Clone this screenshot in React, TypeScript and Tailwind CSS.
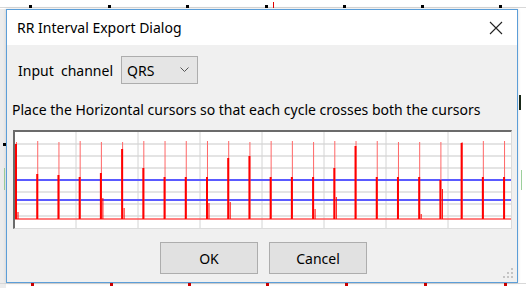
import React from "react";

// spike positions and how far up the bright red part reaches (chart-local y)
const spikes: { top: number; thick: number; bump?: number }[] = [
  { top: 10, thick: 12, bump: 80 },
  { top: 9, thick: 42 },
  { top: 10, thick: 43 },
  { top: 9, thick: 45 },
  { top: 10, thick: 41, bump: 66 },
  { top: 10, thick: 17, bump: 76 },
  { top: 9, thick: 36 },
  { top: 9, thick: 45 },
  { top: 9, thick: 45 },
  { top: 9, thick: 45, bump: 71 },
  { top: 9, thick: 26, bump: 70 },
  { top: 10, thick: 24 },
  { top: 9, thick: 45 },
  { top: 9, thick: 45 },
  { top: 10, thick: 45, bump: 77 },
  { top: 9, thick: 36, bump: 65 },
  { top: 9, thick: 14 },
  { top: 9, thick: 45 },
  { top: 10, thick: 45 },
  { top: 10, thick: 45, bump: 82 },
  { top: 10, thick: 48, bump: 57 },
  { top: 10, thick: 11 },
  { top: 9, thick: 45 },
  { top: 9, thick: 45 },
];

const vGrid = [61, 123, 185, 247, 309, 371, 433];
const hGrid = [12, 24, 36, 60, 72, 84];
const topDots = [29, 108, 186, 265, 343, 421, 499];
const bottomMarks = [31, 110, 188, 266, 345, 424, 504];

const font = { fontFamily: '"Noto Sans", "Open Sans", sans-serif' };

// the plot window of the host app that shows behind the dialog
const Backdrop = () => (
  <svg width="526" height="288" className="absolute inset-0">
    <rect x="0" y="9" width="6" height="279" fill="#ececec" />
    <line x1="0" x2="526" y1="7.5" y2="7.5" stroke="#d8d8d8" />
    <line x1="0" x2="526" y1="283.5" y2="283.5" stroke="#d8d8d8" />
    <line x1="4.5" x2="4.5" y1="168" y2="190" stroke="#9ccf9c" />
    <line x1="521.5" x2="521.5" y1="170" y2="190" stroke="#9ccf9c" />
    <rect x="3" y="143" width="3" height="3" fill="#000" />
    <rect x="519" y="95" width="2" height="15" fill="#1a2a1a" />
    <line x1="273.5" x2="273.5" y1="2" y2="8" stroke="#e00000" />
    {topDots.map((x) => (
      <rect key={x} x={x} y="5" width="3" height="3" fill="#000" />
    ))}
    {bottomMarks.map((x) => (
      <rect key={x} x={x} y="283" width="3" height="3" fill="#d00000" />
    ))}
  </svg>
);

const Chart = () => {
  const base = 87;
  return (
    <div className="w-[499px] h-[99px] bg-white border-t-2 border-l-2 border-[#6b6b6b] border-r border-b border-r-[#dcdcdc] border-b-[#dcdcdc]">
      <svg width="496" height="96" className="block">
        {hGrid.map((y) => (
          <line key={y} x1="0" x2="496" y1={y} y2={y} stroke="#e4e4e4" strokeWidth="2" />
        ))}
        {vGrid.map((x) => (
          <line key={x} x1={x} x2={x} y1="0" y2="96" stroke="#d4d4d4" strokeWidth="1" />
        ))}
        <line x1="0" x2="496" y1="48" y2="48" stroke="#5a5aff" strokeWidth="2" />
        <line x1="0" x2="496" y1="68" y2="68" stroke="#5a5aff" strokeWidth="2" />
        <line x1="0" x2="496" y1={base} y2={base} stroke="#ff5555" strokeWidth="1.5" />
        {spikes.map((s, i) => {
          const x = 1.5 + i * 21.22;
          return (
            <g key={i}>
              <line x1={x} x2={x} y1={base} y2={s.top} stroke="#ff6666" strokeWidth="1" />
              <line x1={x - 0.5} x2={x - 0.5} y1={base} y2={s.thick} stroke="#ff0000" strokeWidth="2" />
              {s.bump && (
                <line x1={x + 1.5} x2={x + 1.5} y1={base} y2={s.bump} stroke="#ff0000" strokeWidth="1" />
              )}
            </g>
          );
        })}
      </svg>
    </div>
  );
};

const Grip = () => (
  <svg width="12" height="12" className="absolute right-[3px] bottom-[3px]">
    {[
      [9, 1],
      [5, 5],
      [9, 5],
      [1, 9],
      [5, 9],
      [9, 9],
    ].map(([x, y]) => (
      <rect key={`${x}-${y}`} x={x} y={y} width="2" height="2" fill="#c4c4c4" />
    ))}
  </svg>
);

const btn = "w-[98px] h-[32px] bg-[#e1e1e1] border border-[#adadad] text-[14px] text-black";

export default function App() {
  return (
    <div className="relative w-[526px] h-[288px] overflow-hidden bg-white pt-[9px] pl-[6px]" style={font}>
      <Backdrop />

      {/* dialog */}
      <div className="relative w-[512px] h-[274px] border border-[#5c9ed8] bg-[#f0f0f0] flex flex-col shadow-[0_0_3px_rgba(0,0,0,0.15)]">
        <div className="h-[35px] bg-white flex items-center justify-between pl-[10px] pr-[14px] shrink-0">
          <span className="text-[14px] text-black">RR Interval Export Dialog</span>
          <svg width="14" height="14" viewBox="0 0 14 14">
            <path d="M1 1 L13 13 M13 1 L1 13" stroke="#222" strokeWidth="1.1" />
          </svg>
        </div>

        <div className="relative flex-1 flex flex-col">
          <div className="flex items-center mt-[11px] ml-[11px] gap-[8px]">
            <span className="text-[14px] text-black whitespace-pre">Input  channel</span>
            <div className="w-[77px] h-[28px] bg-[#e5e5e5] border border-[#adadad] flex items-center justify-between pl-[5px] pr-[8px]">
              <span className="text-[14px] text-black">QRS</span>
              <svg width="9" height="6" viewBox="0 0 9 6">
                <path d="M0.5 0.5 L4.5 4.5 L8.5 0.5" fill="none" stroke="#555" strokeWidth="1" />
              </svg>
            </div>
          </div>

          <div className="mt-[16px] ml-[5px] text-[14px] text-black leading-[20px]">
            Place the Horizontal cursors so that each cycle crosses both the cursors
          </div>

          <div className="mt-[10px] ml-[6px]">
            <Chart />
          </div>

          <div className="flex gap-[11px] mt-[13px] ml-[153px]">
            <button className={btn}>OK</button>
            <button className={btn}>Cancel</button>
          </div>

          <Grip />
        </div>
      </div>
    </div>
  );
}
